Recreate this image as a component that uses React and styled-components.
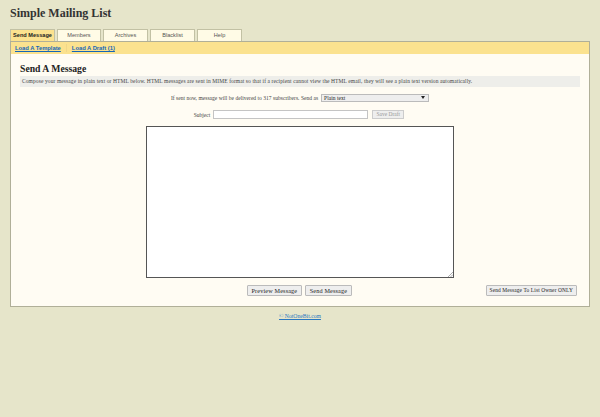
import React from 'react'
import styled, { createGlobalStyle } from 'styled-components'

const GlobalStyle = createGlobalStyle`
  html, body {
    margin: 0;
    padding: 0;
    background: #e6e5ca;
    font-family: "Liberation Serif", serif;
    color: #333;
  }
`

const Page = styled.div`
  width: 600px;
  height: 417px;
  padding: 7px 10px 0;
  box-sizing: border-box;
  overflow: hidden;
`

const Title = styled.h1`
  margin: 0 0 9px;
  height: 13px;
  font-size: 12px;
  line-height: 13px;
  font-weight: bold;
  color: #333;
`

const Tabs = styled.div`
  display: flex;
  gap: 2px;
  height: 12px;
`

const Tab = styled.div`
  width: ${props => props.width}px;
  box-sizing: border-box;
  border: 1px solid #c2c1a4;
  border-bottom: none;
  background: ${props => props.active ? '#fbe28f' : '#fffbe6'};
  color: ${props => props.active ? '#222' : '#555'};
  font-family: "Liberation Sans", sans-serif;
  font-size: 5.6px;
  font-weight: ${props => props.active ? 'bold' : 'normal'};
  line-height: 11px;
  text-align: center;
`

const Panel = styled.div`
  height: 266px;
  box-sizing: border-box;
  border: 1px solid #b0af98;
  background: #fffcf3;
  display: flex;
  flex-direction: column;
`

const SubNav = styled.div`
  height: 12px;
  flex: none;
  background: #fbe28f;
  display: flex;
  align-items: center;
  padding-left: 4px;
  font-family: "Liberation Sans", sans-serif;
  font-size: 5.8px;
  font-weight: bold;
`

const SubLink = styled.a`
  color: #1466b8;
  text-decoration: underline;
`

const SubDivider = styled.span`
  width: 1px;
  height: 8px;
  margin: 0 5px;
  background: #f0d78a;
`

const Content = styled.div`
  flex: 1;
  padding: 9px 9px 0;
  display: flex;
  flex-direction: column;
  align-items: center;
`

const Heading = styled.h2`
  align-self: stretch;
  margin: 0 0 1px;
  height: 12px;
  font-size: 9.7px;
  line-height: 12px;
  font-weight: bold;
  color: #222;
`

const Notice = styled.div`
  align-self: stretch;
  height: 11px;
  padding-left: 2px;
  background: #eeeeea;
  font-size: 5.5px;
  line-height: 11px;
  letter-spacing: 0.1px;
  color: #444;
  white-space: nowrap;
`

const SendRow = styled.div`
  margin-top: 6px;
  height: 9px;
  display: flex;
  align-items: center;
  gap: 3px;
  font-size: 5.5px;
  letter-spacing: 0.03px;
  color: #444;
`

const SelectBox = styled.div`
  width: 108px;
  height: 8px;
  box-sizing: border-box;
  border: 1px solid #bbb;
  background: #eee;
  padding: 0 3px 0 2px;
  display: flex;
  justify-content: space-between;
  align-items: center;
  font-size: 5.5px;
  color: #222;
`

const SubjectRow = styled.div`
  margin: 8px 2px 0 0;
  height: 9px;
  display: flex;
  align-items: center;
  font-size: 5.5px;
  color: #444;
`

const SubjectInput = styled.div`
  width: 155px;
  height: 9px;
  margin: 0 4px 0 3px;
  box-sizing: border-box;
  border: 1px solid #c4c4c4;
  background: #fff;
`

const DraftButton = styled.div`
  width: 32px;
  height: 9px;
  box-sizing: border-box;
  border: 1px solid #ccc;
  background: #eee;
  color: #999;
  font-size: 5.5px;
  line-height: 7px;
  text-align: center;
`

const MessageArea = styled.div`
  position: relative;
  width: 308px;
  height: 152px;
  margin-top: 7px;
  flex: none;
  box-sizing: border-box;
  border: 1px solid #555;
  background: #fff;
`

const Grip = styled.svg`
  position: absolute;
  right: 0;
  bottom: 0;
`

const Actions = styled.div`
  align-self: stretch;
  margin-top: 7px;
  height: 11px;
  display: flex;
  align-items: center;
`

const MainActions = styled.div`
  margin-left: 227px;
  display: flex;
  gap: 3.5px;
`

const Button = styled.div`
  height: 11px;
  box-sizing: border-box;
  padding: 0 ${props => props.small ? 3 : 3.5}px;
  border: 1px solid #bbb;
  border-radius: 1px;
  background: #eee;
  color: #222;
  font-size: ${props => props.small ? 5.4 : 6.2}px;
  line-height: 9px;
  letter-spacing: ${props => props.small ? 0.13 : 0.15}px;
  white-space: nowrap;
`

const OwnerAction = styled.div`
  margin-left: auto;
  margin-right: 3px;
`

const Footer = styled.div`
  margin-top: 5.5px;
  text-align: center;
  font-size: 5.7px;
  line-height: 7px;
`

const FooterLink = styled.a`
  color: #2a78c0;
  text-decoration: underline;
`

const tabs = [
  { label: 'Send Message', width: 45, active: true },
  { label: 'Members', width: 44 },
  { label: 'Archives', width: 45 },
  { label: 'Blacklist', width: 45 },
  { label: 'Help', width: 45 },
]

const App = () => (
  <Page>
    <GlobalStyle />
    <Title>Simple Mailing List</Title>

    <Tabs>
      {tabs.map(tab =>
        <Tab key={tab.label} width={tab.width} active={tab.active}>{tab.label}</Tab>
      )}
    </Tabs>

    <Panel>
      <SubNav>
        <SubLink>Load A Template</SubLink>
        <SubDivider />
        <SubLink>Load A Draft (1)</SubLink>
      </SubNav>

      <Content>
        <Heading>Send A Message</Heading>
        <Notice>
          Compose your message in plain text or HTML below. HTML messages are sent in MIME format so that if a recipient cannot view the HTML email, they will see a plain text version automatically.
        </Notice>

        <SendRow>
          <span>If sent now, message will be delivered to 317 subscribers. Send as</span>
          <SelectBox>
            <span>Plain text</span>
            <svg width="4" height="3" viewBox="0 0 4 3"><path d="M0 0h4L2 3z" fill="#222" /></svg>
          </SelectBox>
        </SendRow>

        <SubjectRow>
          <span>Subject</span>
          <SubjectInput />
          <DraftButton>Save Draft</DraftButton>
        </SubjectRow>

        <MessageArea>
          <Grip width="5" height="5" viewBox="0 0 5 5">
            <path d="M0 5L5 0M2.5 5L5 2.5" stroke="#888" strokeWidth="0.7" />
          </Grip>
        </MessageArea>

        <Actions>
          <MainActions>
            <Button>Preview Message</Button>
            <Button>Send Message</Button>
          </MainActions>
          <OwnerAction>
            <Button small>Send Message To List Owner ONLY</Button>
          </OwnerAction>
        </Actions>
      </Content>
    </Panel>

    <Footer>
      <FooterLink>© NotOneBit.com</FooterLink>
    </Footer>
  </Page>
)

export default App
